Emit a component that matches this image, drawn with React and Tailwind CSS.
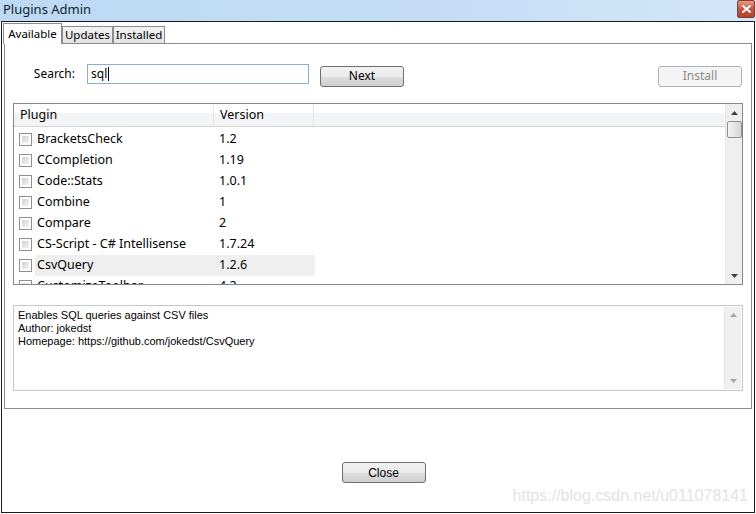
import React from 'react';

// --- Data ---
const PLUGINS = [
  { name: 'BracketsCheck', version: '1.2' },
  { name: 'CCompletion', version: '1.19' },
  { name: 'Code::Stats', version: '1.0.1' },
  { name: 'Combine', version: '1' },
  { name: 'Compare', version: '2' },
  { name: 'CS-Script - C# Intellisense', version: '1.7.24' },
  { name: 'CsvQuery', version: '1.2.6', selected: true },
  { name: 'CustomizeToolbar', version: '4.2' },
];

const UI_FONT = { fontFamily: '"Noto Sans", "Open Sans", sans-serif' };
const TAHOMA = { fontFamily: '"Liberation Sans", Arial, sans-serif' };

// --- Small pieces ---
const WinButton = ({ children, disabled, className = '' }) => (
  <div
    className={`h-[21px] w-[84px] rounded-[3px] border flex items-center justify-center text-[12px] ${
      disabled
        ? 'border-[#adb2b5] bg-[#f4f4f4] text-[#8a8a8a]'
        : 'border-[#707070] bg-[linear-gradient(#f2f2f2_0%,#ebebeb_50%,#dddddd_51%,#cfcfcf_100%)] text-black'
    } ${className}`}
  >
    {children}
  </div>
);

const Checkbox = () => (
  <div className="w-[13px] h-[13px] border border-[#8e8f8f] bg-white p-[2px] shrink-0">
    <div className="w-full h-full bg-[linear-gradient(135deg,#d2d2d2,#f4f4f4)]" />
  </div>
);

const Arrow = ({ up, color = '#404040' }) => (
  <svg width="7" height="4" viewBox="0 0 7 4">
    {up ? <path d="M0 4 L3.5 0 L7 4 Z" fill={color} /> : <path d="M0 0 L7 0 L3.5 4 Z" fill={color} />}
  </svg>
);

const Tab = ({ label, active, width }) => (
  <div
    className={`flex items-center justify-center border border-b-0 text-[11.5px] ${width} ${
      active
        ? 'h-[21px] border-[#898c95] bg-white -mb-px z-10'
        : 'h-[17px] border-[#898c95] bg-[linear-gradient(#f2f2f2,#e3e3e3)]'
    }`}
  >
    {label}
  </div>
);

// --- Main ---
const App = () => {
  return (
    <div className="w-[756px] h-[514px] bg-white overflow-hidden relative text-black" style={UI_FONT}>
      {/* Title bar */}
      <div className="h-[21px] flex justify-between items-start bg-[linear-gradient(90deg,#bdd9f3,#c5def6_60%,#d3e7f9)]">
        <span className="pl-[3px] text-[13px] leading-[18px] text-[#0e1e30]">Plugins Admin</span>
        <div className="mr-[1px] w-[18px] h-[18px] rounded-[2px] border border-[#8a3a2c] bg-[linear-gradient(#e79a83,#c8553d_50%,#b8402a)] flex items-center justify-center">
          <svg width="9" height="8" viewBox="0 0 9 8">
            <path d="M1 1 L8 7 M8 1 L1 7" stroke="#fff" strokeWidth="2" strokeLinecap="square" />
          </svg>
        </div>
      </div>

      {/* Client area */}
      <div className="ml-[1px] w-[754px] h-[492px] border border-[#1b1b1b] flex flex-col">
        {/* Tabs */}
        <div className="flex items-end pl-[1px] pt-[1px] h-[21px]">
          <Tab label="Available" active width="w-[59px]" />
          <Tab label="Updates" width="w-[51px]" />
          <Tab label="Installed" width="w-[52px]" />
        </div>

        {/* Tab pane */}
        <div className="ml-[2px] w-[748px] h-[366px] border border-[#898c95] flex flex-col">
          {/* Search row */}
          <div className="flex items-center h-[20px] mt-[20px]">
            <span className="w-[70px] text-right text-[12px]">Search:</span>
            <div className="ml-[12px] w-[222px] h-[20px] border border-[#87aede] bg-white flex items-center px-[3px] text-[12px]">
              sql<span className="ml-px w-px h-[14px] bg-black" />
            </div>
            <WinButton className="ml-[11px] mt-[4px]">Next</WinButton>
            <WinButton disabled className="ml-[254px] mt-[4px]">Install</WinButton>
          </div>

          {/* Plugin list */}
          <div className="ml-[8px] mt-[19px] w-[730px] h-[182px] border border-[#828790] flex overflow-hidden">
            <div className="flex-1 flex flex-col overflow-hidden">
              <div className="h-[23px] flex shrink-0 border-b border-[#d5d5d5] bg-[linear-gradient(#ffffff_0%,#ffffff_40%,#f3f4f6_41%,#f3f4f6_100%)] text-[12.5px]">
                <div className="w-[200px] pl-[6px] flex items-center border-r border-[#e3e5e8]">Plugin</div>
                <div className="w-[100px] pl-[6px] flex items-center border-r border-[#e3e5e8]">Version</div>
                <div className="flex-1" />
              </div>
              <div className="pt-[2px]">
                {PLUGINS.map((p) => (
                  <div key={p.name} className="h-[21px] flex items-center text-[12.5px]">
                    <div className="pl-[5px] pr-[3px] flex items-center">
                      <Checkbox />
                    </div>
                    <div className={`w-[280px] h-full flex items-center ${p.selected ? 'bg-[#efefef]' : ''}`}>
                      <span className="w-[184px] pl-[2px]">{p.name}</span>
                      <span>{p.version}</span>
                    </div>
                  </div>
                ))}
              </div>
            </div>
            {/* Scrollbar */}
            <div className="w-[17px] bg-[#efefef] border-l border-[#e6e6e6] flex flex-col items-center">
              <div className="h-[17px] flex items-center justify-center"><Arrow up /></div>
              <div className="w-[15px] h-[17px] rounded-[2px] border border-[#8f8f8f] bg-[linear-gradient(90deg,#f3f3f3,#e5e5e5_50%,#d7d7d7)]" />
              <div className="flex-1" />
              <div className="h-[17px] flex items-center justify-center"><Arrow /></div>
            </div>
          </div>

          {/* Description */}
          <div className="ml-[8px] mt-[20px] w-[730px] h-[86px] border border-[#c4c7cc] flex">
            <div className="flex-1 pl-[4px] pt-[3px] text-[11px] leading-[13px]" style={TAHOMA}>
              <div>Enables SQL queries against CSV files</div>
              <div>Author: jokedst</div>
              <div>Homepage: https://github.com/jokedst/CsvQuery</div>
            </div>
            <div className="w-[17px] my-[1px] mr-[1px] bg-[#f0f0f0] border-l border-[#e3e3e3] flex flex-col items-center justify-between py-[6px]">
              <Arrow up color="#a3a3a3" />
              <Arrow color="#a3a3a3" />
            </div>
          </div>
        </div>

        {/* Footer */}
        <div className="flex justify-center pt-[53px] pl-[11px]">
          <div style={TAHOMA}>
            <WinButton className="text-[11px]">Close</WinButton>
          </div>
        </div>
      </div>

      {/* Watermark */}
      <div
        className="absolute right-[8px] bottom-[6px] text-[16px] text-[#e3e3e3]"
        style={{ fontFamily: '"Liberation Sans", Arial, sans-serif' }}
      >
        https://blog.csdn.net/u011078141
      </div>
    </div>
  );
};

export default App;
